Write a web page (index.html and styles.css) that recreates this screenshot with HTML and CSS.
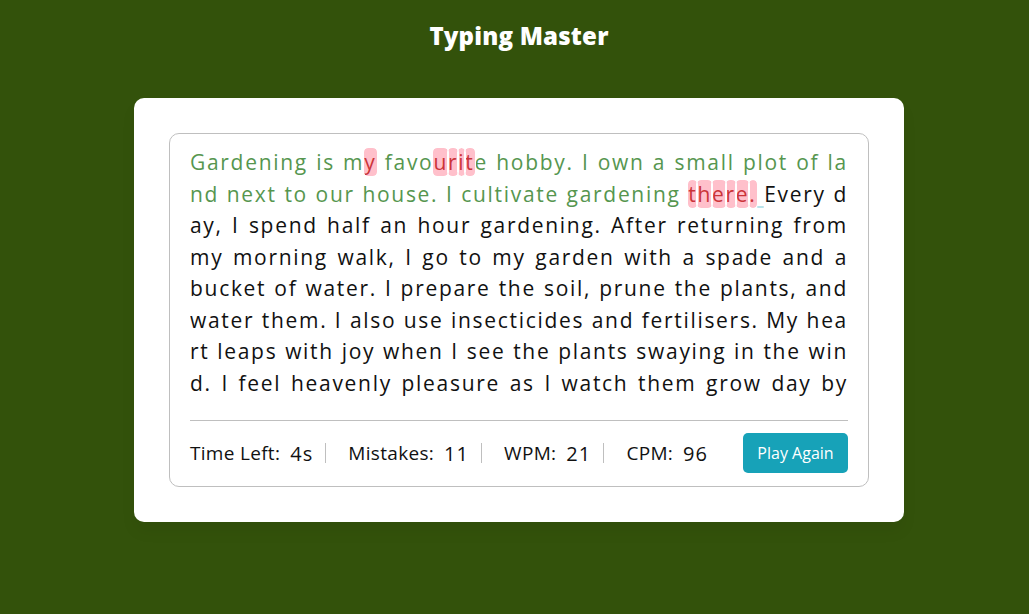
FILE: index.html
```html
<!DOCTYPE html>
<html lang="en">
<head>
<meta charset="utf-8">
<title>Typing Master</title>
<link rel="stylesheet" href="styles.css">
</head>
<body>
<h1 class="title">Typing Master</h1>
<div class="wrapper">
  <div class="content-box">
    <div class="typing-text">
      <div class="line"><span class="correct">Gardening is m</span><span class="incorrect">y</span><span class="correct"> favo</span><span class="incorrect">u</span><span class="incorrect">r</span><span class="incorrect">i</span><span class="incorrect">t</span><span class="correct">e hobby. I own a small plot of la</span></div>
      <div class="line"><span class="correct">nd next to our house. I cultivate gardening </span><span class="incorrect">t</span><span class="incorrect">h</span><span class="incorrect">e</span><span class="incorrect">r</span><span class="incorrect">e</span><span class="incorrect">.</span><span class="active"> </span>Every d</div>
      <div class="line">ay, I spend half an hour gardening. After returning from</div>
      <div class="line">my morning walk, I go to my garden with a spade and a</div>
      <div class="line">bucket of water. I prepare the soil, prune the plants, and</div>
      <div class="line">water them. I also use insecticides and fertilisers. My hea</div>
      <div class="line">rt leaps with joy when I see the plants swaying in the win</div>
      <div class="line">d. I feel heavenly pleasure as I watch them grow day by</div>
      <div class="line">day. Gardening keeps me healthy and fills my mind.</div>
    </div>
    <div class="content">
      <ul class="result-details">
        <li class="stat"><p class="label">Time Left:</p><span class="value">4s</span></li>
        <li class="stat"><p class="label">Mistakes:</p><span class="value">11</span></li>
        <li class="stat"><p class="label">WPM:</p><span class="value">21</span></li>
        <li class="stat"><p class="label">CPM:</p><span class="value">96</span></li>
      </ul>
      <button class="play-btn">Play Again</button>
    </div>
  </div>
</div>
</body>
</html>
```
FILE: styles.css
```css
* {
  box-sizing: border-box;
}
body {
  margin: 0;
  padding-left: 9px;
  min-height: 100vh;
  background: #33520b;
  font-family: "Open Sans", "Noto Sans", sans-serif;
  display: flex;
  flex-direction: column;
  align-items: center;
}
.title {
  margin: 18px 0 0;
  font-size: 24px;
  line-height: 36px;
  font-weight: 800;
  letter-spacing: 0.2px;
  color: #fff;
}
.wrapper {
  width: 770px;
  margin-top: 44px;
  padding: 35px;
  background: #fff;
  border-radius: 10px;
  box-shadow: 0 10px 15px rgba(0, 0, 0, 0.05);
}
.content-box {
  padding: 13px 20px 0;
  border-radius: 10px;
  border: 1px solid #bfbfbf;
}
.typing-text {
  overflow: hidden;
  max-height: 256px;
  color: #111;
}
.line {
  font-size: 21px;
  line-height: 31.5px;
  letter-spacing: 1.7px;
  text-align: justify;
  text-align-last: justify;
}
.correct {
  color: #56964f;
}
.incorrect {
  color: #cb3439;
  background: #ffc0cb;
  border-radius: 4px;
  outline: 1px solid #fff;
}
.active {
  position: relative;
}
.active::before {
  content: "";
  position: absolute;
  left: 0;
  bottom: 0;
  width: 100%;
  height: 2px;
  border-radius: 5px;
  background: #17a2b8;
  opacity: 0.3;
}
.content {
  margin-top: 17px;
  display: flex;
  padding: 12px 0 13px;
  align-items: center;
  justify-content: space-between;
  border-top: 1px solid #bfbfbf;
}
.result-details {
  display: flex;
  align-items: center;
  justify-content: space-between;
  width: calc(100% - 140px);
  margin: 0;
  padding: 0;
  list-style: none;
}
.stat {
  display: flex;
  align-items: center;
  height: 20px;
  color: #111;
}
.stat + .stat {
  padding-left: 22px;
  border-left: 1px solid #bfbfbf;
}
.label {
  margin: 0;
  font-size: 19px;
  letter-spacing: 0.3px;
}
.value {
  margin-left: 10px;
  font-size: 20px;
  font-weight: 500;
  letter-spacing: 1px;
}
.play-btn {
  width: 105px;
  padding: 8px 0;
  border: none;
  border-radius: 5px;
  background: #17a2b8;
  color: #fff;
  font-family: inherit;
  font-size: 16px;
  line-height: 24px;
}
```
